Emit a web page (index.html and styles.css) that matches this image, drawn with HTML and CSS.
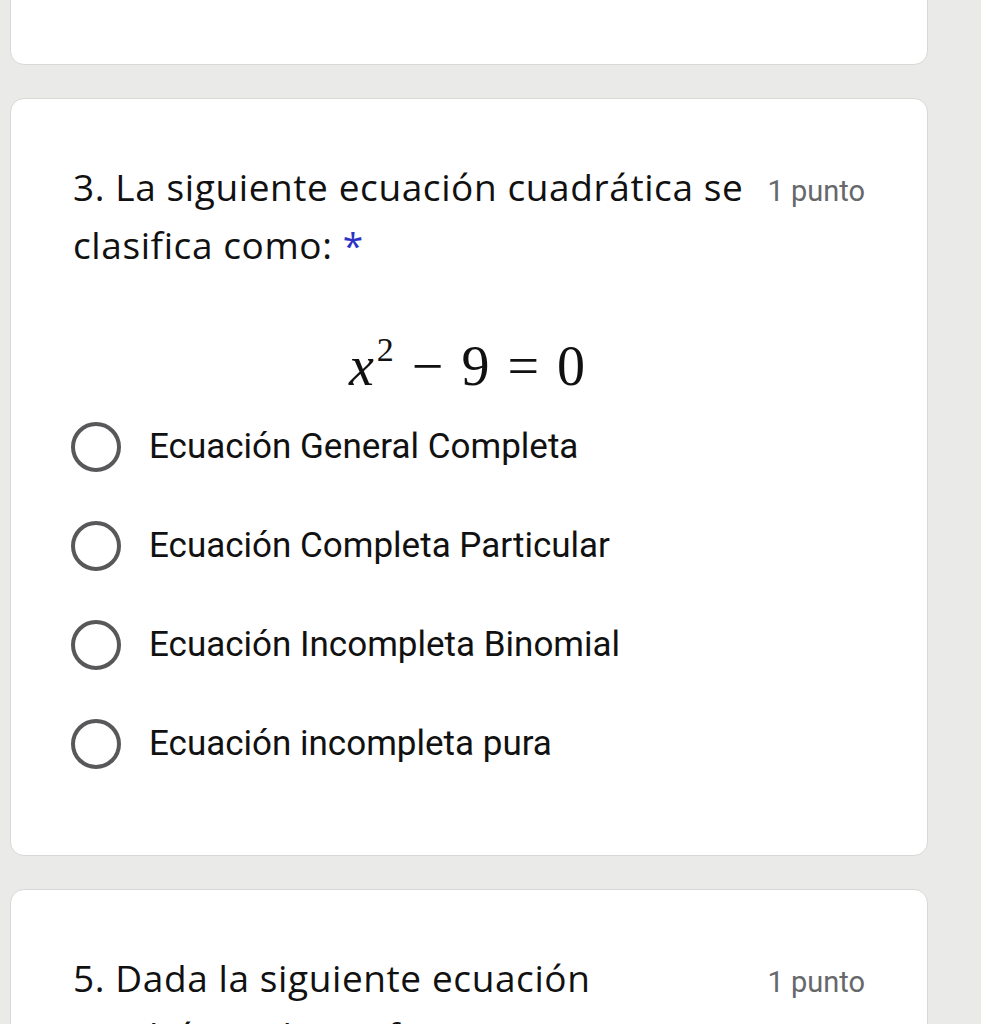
FILE: index.html
```html
<!DOCTYPE html>
<html lang="es">
<head>
    <meta charset="UTF-8">
    <meta name="viewport" content="width=device-width, initial-scale=1.0">
    <title>Cuestionario - Ecuaciones cuadráticas</title>
    <link rel="stylesheet" href="styles.css">
</head>
<body>
    <div class="formulario">
        <div class="tarjeta tarjeta-anterior"></div>

        <div class="tarjeta pregunta">
            <div class="encabezado">
                <h3 class="titulo">3. La siguiente ecuación cuadrática se clasifica como: <span class="obligatorio">*</span></h3>
                <span class="puntos">1 punto</span>
            </div>

            <div class="ecuacion">
                <span class="var">x</span><sup>2</sup><span class="op">−</span><span>9</span><span class="op">=</span><span>0</span>
            </div>

            <ul class="opciones">
                <li><span class="radio"></span>Ecuación General Completa</li>
                <li><span class="radio"></span>Ecuación Completa Particular</li>
                <li><span class="radio"></span>Ecuación Incompleta Binomial</li>
                <li><span class="radio"></span>Ecuación incompleta pura</li>
            </ul>
        </div>

        <div class="tarjeta pregunta">
            <div class="encabezado">
                <h3 class="titulo">5. Dada la siguiente ecuación cuadrática de coeficientes enteros:</h3>
                <span class="puntos">1 punto</span>
            </div>
        </div>
    </div>
</body>
</html>
```

FILE: styles.css
```css
body {
    margin: 0;
    padding: 0;
    background: #eaebe8;
    color: #202124;
    font-family: "Open Sans", "Noto Sans", sans-serif;
    overflow: hidden;
}
.formulario {
    width: 918px;
    margin-left: 10px;
    margin-top: -30px;
    display: flex;
    flex-direction: column;
    gap: 33px;
}
.tarjeta {
    background: #ffffff;
    border: 1px solid #d8d9d6;
    border-radius: 14px;
    box-sizing: border-box;
}
.tarjeta-anterior {
    height: 95px;
}
.pregunta {
    padding: 59px 62px 0 62px;
}
.pregunta:nth-child(2) {
    height: 758px;
}
.encabezado {
    display: flex;
    align-items: flex-start;
    gap: 18px;
}
.titulo {
    flex: 1;
    margin: 0;
    font-size: 37px;
    font-weight: 400;
    line-height: 58px;
    letter-spacing: 0.6px;
    color: #111;
}
.obligatorio {
    color: #2a33c4;
}
.puntos {
    font-family: Roboto, "Liberation Sans", sans-serif;
    font-size: 29px;
    color: #66686b;
    line-height: 58px;
    padding-top: 4px;
    white-space: nowrap;
}
.ecuacion {
    text-align: center;
    font-family: "Liberation Serif", "DejaVu Serif", serif;
    font-size: 56px;
    line-height: 60px;
    margin-top: 62px;
    margin-right: 4px;
    color: #111;
}
.ecuacion .var {
    font-style: italic;
}
.ecuacion sup {
    font-size: 34px;
    vertical-align: 24px;
    line-height: 0;
    margin-left: 3px;
}
.ecuacion .op {
    margin: 0 18px;
}
.opciones {
    list-style: none;
    margin: 1px 0 0 -2px;
    padding: 0;
}
.opciones li {
    display: flex;
    align-items: center;
    gap: 28px;
    height: 99px;
    font-family: Roboto, "Liberation Sans", sans-serif;
    font-size: 35px;
    color: #111;
}
.radio {
    width: 50px;
    height: 50px;
    border: 4px solid #58585a;
    border-radius: 50%;
    box-sizing: border-box;
    flex-shrink: 0;
}
```
